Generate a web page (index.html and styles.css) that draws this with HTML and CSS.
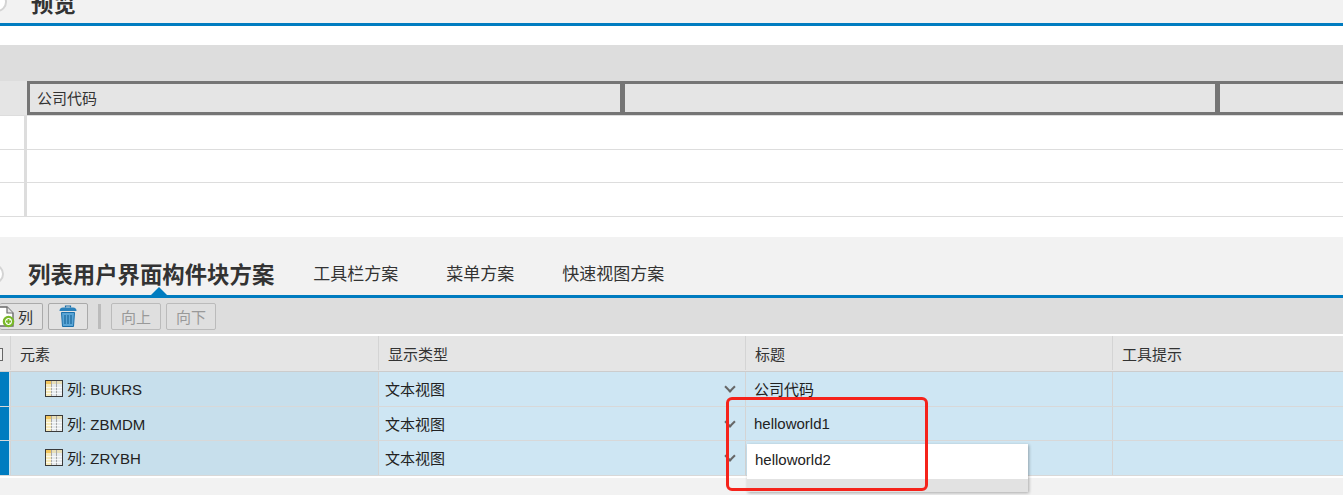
FILE: index.html
```html
<!DOCTYPE html>
<html lang="zh-CN">
<head>
    <meta charset="UTF-8">
    <title>列表用户界面构件块方案</title>
    <link rel="stylesheet" href="styles.css">
</head>
<body>
    <div class="panel-head preview-head">
        <span class="collapse-ring"></span>
        <h2 class="panel-title">预览</h2>
    </div>

    <div class="preview">
        <div class="preview-toolbar"></div>
        <div class="preview-header">
            <div class="corner"></div>
            <div class="preview-col">公司代码</div>
            <div class="preview-col"></div>
            <div class="preview-col"></div>
        </div>
        <div class="preview-row"><div class="corner"></div><div class="preview-cell"></div></div>
        <div class="preview-row"><div class="corner"></div><div class="preview-cell"></div></div>
        <div class="preview-row"><div class="corner"></div><div class="preview-cell"></div></div>
    </div>

    <div class="panel-head list-head">
        <span class="collapse-ring"></span>
        <h2 class="panel-title">列表用户界面构件块方案</h2>
        <nav class="tabs">
            <a class="tab">工具栏方案</a>
            <a class="tab">菜单方案</a>
            <a class="tab">快速视图方案</a>
        </nav>
        <span class="tab-caret"></span>
    </div>

    <div class="toolbar">
        <button class="tool-btn add-btn">
            <svg class="add-icon" viewBox="0 0 20 22" width="20" height="22">
                <path d="M2 1h10l6 6v13H2z" fill="#fff" stroke="#6a6a6a" stroke-width="1.4"/>
                <path d="M12 1v6h6" fill="#e4e4e4" stroke="#6a6a6a" stroke-width="1.2"/>
                <circle cx="13.500" cy="15.500" r="4.600" fill="#fff" stroke="#79b82a" stroke-width="2.400"/>
                <path d="M13.500 13v5M11 15.500h5" stroke="#79b82a" stroke-width="1.800"/>
            </svg>
            列
        </button>
        <button class="tool-btn trash-btn">
            <svg viewBox="0 0 18 22" width="18" height="22">
                <path d="M6.500 2.500V1h5v1.500" fill="none" stroke="#1a6ea8" stroke-width="1.200"/>
                <path d="M0.500 6q0-3.500 3.500-3.500h10q3.500 0 3.500 3.500z" fill="#2a81bb"/>
                <path d="M2.500 7.500h13l-1 14H3.500z" fill="#5aa5d6" stroke="#1a6ea8"/>
                <path d="M6 10v9M9 10v9M12 10v9" stroke="#1d6a9f" stroke-width="1.300"/>
            </svg>
        </button>
        <span class="tool-sep"></span>
        <button class="tool-btn is-disabled">向上</button>
        <button class="tool-btn is-disabled">向下</button>
    </div>

    <div class="grid">
        <div class="grid-row grid-header">
            <div class="select-cell"><span class="select-box"></span></div>
            <div class="grid-cell">元素</div>
            <div class="grid-cell">显示类型</div>
            <div class="grid-cell">标题</div>
            <div class="grid-cell">工具提示</div>
        </div>
        <div class="grid-row is-selected">
            <div class="select-cell"></div>
            <div class="grid-cell element-cell">
                <svg class="column-icon" width="18" height="17"><use href="#column"/></svg>
                列: BUKRS
            </div>
            <div class="grid-cell type-cell">文本视图<span class="chevron"></span></div>
            <div class="grid-cell title-cell">公司代码</div>
            <div class="grid-cell"></div>
        </div>
        <div class="grid-row is-selected">
            <div class="select-cell"></div>
            <div class="grid-cell element-cell">
                <svg class="column-icon" width="18" height="17"><use href="#column"/></svg>
                列: ZBMDM
            </div>
            <div class="grid-cell type-cell">文本视图<span class="chevron"></span></div>
            <div class="grid-cell title-cell">helloworld1</div>
            <div class="grid-cell"></div>
        </div>
        <div class="grid-row is-selected">
            <div class="select-cell"></div>
            <div class="grid-cell element-cell">
                <svg class="column-icon" width="18" height="17"><use href="#column"/></svg>
                列: ZRYBH
            </div>
            <div class="grid-cell type-cell">文本视图<span class="chevron"></span></div>
            <div class="grid-cell title-cell"></div>
            <div class="grid-cell"></div>
        </div>
    </div>

    <div class="suggest">
        <div class="suggest-item">helloworld2</div>
        <div class="suggest-foot"></div>
    </div>
    <div class="red-mark"></div>

    <svg class="icon-defs" width="0" height="0">
        <symbol id="column" viewBox="0 0 18 17">
            <rect x="0.500" y="0.500" width="17" height="16" fill="#f4f4f0" stroke="#3a3a3a"/>
            <rect x="1" y="1" width="5" height="15" fill="#f7eab8"/>
            <rect x="1" y="1" width="5" height="3" fill="#f3c75e"/>
            <rect x="6" y="1" width="11" height="3" fill="#e8dfb8"/>
            <rect x="7" y="4" width="4" height="12" fill="#e6ebee"/>
            <rect x="12" y="4" width="5" height="12" fill="#e6ebee"/>
            <path d="M6.500 1v15M11.500 1v15" stroke="#a8a8a8"/>
            <path d="M1 7.500h16M1 10.500h16M1 13.500h16" stroke="#fff" stroke-opacity="0.700"/>
        </symbol>
    </svg>
</body>
</html>
```

FILE: styles.css
```css
* {
    margin: 0;
    padding: 0;
    box-sizing: border-box;
}

body {
    font-family: "Liberation Sans", "Noto Sans CJK SC", sans-serif;
    font-size: 15px;
    color: #333;
    background: #f2f2f2;
    height: 495px;
    overflow: hidden;
    position: relative;
}

.panel-head {
    display: flex;
    align-items: center;
    background: #f2f2f2;
    border-bottom: 3px solid #007cc0;
    position: relative;
    overflow: hidden;
}

.preview-head {
    height: 26px;
    padding-left: 31px;
    padding-bottom: 19px;
}

.list-head {
    height: 61px;
    padding-left: 28px;
    padding-top: 13px;
    overflow: visible;
}

.collapse-ring {
    position: absolute;
    width: 20px;
    height: 20px;
    border-radius: 50%;
    border: 2px solid #d4d4d4;
    background: #fff;
}

.preview-head .collapse-ring {
    left: -13px;
    top: -8px;
}

.list-head .collapse-ring {
    left: -16px;
    top: 27px;
}

.panel-title {
    font-size: 22.400px;
    font-weight: 700;
    color: #333;
    white-space: nowrap;
}

.tabs {
    display: flex;
    gap: 48px;
    margin-left: 39px;
}

.tab {
    font-size: 17px;
    color: #333;
}

.tab-caret {
    position: absolute;
    left: 151px;
    bottom: 0;
    border-left: 8px solid transparent;
    border-right: 8px solid transparent;
    border-bottom: 8px solid #007cc0;
}

.preview {
    background: #fff;
    padding-top: 19px;
    height: 211px;
}

.preview-toolbar {
    height: 36px;
    background: #ddd;
}

.preview-header {
    display: flex;
    height: 35px;
    background: #e5e5e5;
    border-bottom: 1px solid #ddd;
}

.preview-header .corner {
    flex: none;
    width: 27px;
    background: #e5e5e5;
}

.preview-col {
    width: 595px;
    flex: none;
    border: 3px solid #757575;
    border-right-width: 2px;
    padding-left: 7px;
    line-height: 30px;
    color: #333;
}

.preview-row {
    display: flex;
    height: 33.500px;
    border-bottom: 1px solid #ddd;
}

.preview-row .corner {
    width: 27px;
    border-right: 3px solid #ddd;
}

.preview-cell {
    flex: 1;
}

.toolbar {
    display: flex;
    align-items: center;
    gap: 5px;
    height: 38px;
    background: #ddd;
    border-bottom: 2px solid #fff;
}

.tool-btn {
    display: flex;
    align-items: center;
    justify-content: center;
    height: 27px;
    border: 1px solid #aaa;
    border-radius: 2px;
    background: #e2e2e2;
    font-family: inherit;
    font-size: 15px;
    color: #333;
}

.add-btn {
    width: 43px;
    justify-content: flex-start;
    padding-left: 18px;
    position: relative;
    overflow: hidden;
    border-left: 0;
}

.add-icon {
    position: absolute;
    left: -5px;
    top: 2px;
}

.trash-btn {
    width: 40px;
}

.tool-sep {
    width: 3px;
    height: 25px;
    margin: 0 5px;
    background: #bbb;
}

.is-disabled {
    width: 50px;
    color: #999;
    border-color: #bbb;
    background: #dfdfdf;
}

.grid {
    position: relative;
    background: #fff;
    padding-bottom: 2px;
}

.grid-row {
    display: grid;
    grid-template-columns: 10px 368px 367px 367px 1fr;
    height: 34.500px;
    border-bottom: 1px solid #d8d8d8;
}

.grid-header {
    height: 36px;
    padding-bottom: 1px;
    background: #e5e5e5;
    border-bottom-color: #ccc;
}

.grid-cell {
    display: flex;
    align-items: center;
    padding-left: 9px;
    border-left: 1px solid #d4d4d4;
    white-space: nowrap;
    position: relative;
}

.select-box {
    display: block;
    width: 8px;
    height: 13px;
    margin: 12px 0 0 -5px;
    border: 1px solid #666;
    background: #eee;
}

.is-selected {
    background: #cee6f3;
    color: #222;
}

.is-selected .select-cell {
    background: #007cc0;
    margin-right: 1px;
}

.element-cell {
    background: #c7dfec;
    padding-left: 34px;
    gap: 4px;
}

.type-cell {
    padding-left: 6px;
}

.title-cell {
    padding-left: 8px;
}

.chevron {
    position: absolute;
    right: 11px;
    top: 11px;
    width: 8px;
    height: 8px;
    border-right: 2.500px solid #666;
    border-bottom: 2.500px solid #666;
    transform: rotate(45deg);
}

.suggest {
    position: absolute;
    left: 747px;
    top: 444px;
    width: 281px;
    box-shadow: 1px 1px 3px rgba(0, 0, 0, 0.3);
    z-index: 2;
}

.suggest-item {
    height: 35px;
    line-height: 32px;
    padding-left: 8px;
    background: #fff;
    color: #222;
}

.suggest-foot {
    height: 13px;
    background: #e2e2e2;
}

.red-mark {
    position: absolute;
    left: 726px;
    top: 397px;
    width: 202px;
    height: 94px;
    border: 3px solid #f5231b;
    border-radius: 6px;
    z-index: 3;
}

.icon-defs {
    position: absolute;
}
```
